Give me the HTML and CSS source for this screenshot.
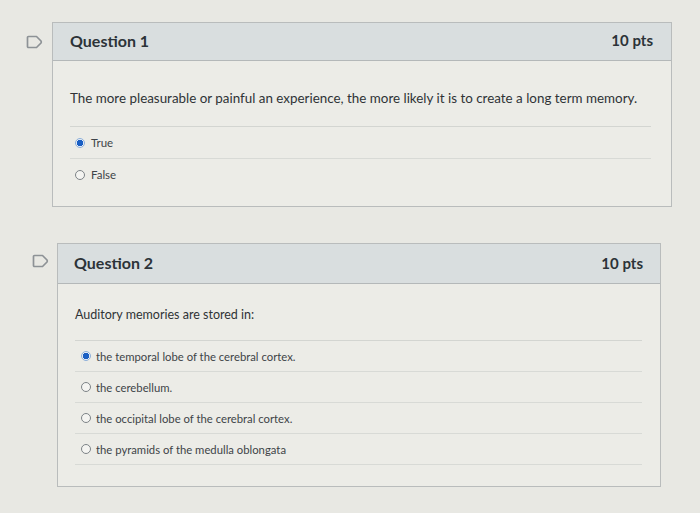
FILE: index.html
```html
<!DOCTYPE html>
<html>
<head>
<meta charset="utf-8">
<link rel="stylesheet" href="styles.css">
</head>
<body>
<div class="page">
  <section class="qrow q1">
    <div class="flag"><svg width="17" height="14" viewBox="0 0 17 14"><path d="M2.5 1.5 H10.5 L15 6 Q15.6 7 15 8 L10.5 12.5 H2.5 Q1.5 12.5 1.5 11.5 V2.5 Q1.5 1.5 2.5 1.5 Z" fill="none" stroke="#8d9296" stroke-width="1.7" stroke-linejoin="round"/></svg></div>
    <div class="card">
      <div class="card-head"><span class="qtitle">Question 1</span><span class="pts">10 pts</span></div>
      <div class="card-body">
        <p class="qtext">The more pleasurable or painful an experience, the more likely it is to create a long term memory.</p>
        <ul class="answers">
          <li class="answer"><span class="radio checked"></span><span>True</span></li>
          <li class="answer"><span class="radio"></span><span>False</span></li>
        </ul>
      </div>
    </div>
  </section>
  <section class="qrow q2">
    <div class="flag"><svg width="17" height="14" viewBox="0 0 17 14"><path d="M2.5 1.5 H10.5 L15 6 Q15.6 7 15 8 L10.5 12.5 H2.5 Q1.5 12.5 1.5 11.5 V2.5 Q1.5 1.5 2.5 1.5 Z" fill="none" stroke="#8d9296" stroke-width="1.7" stroke-linejoin="round"/></svg></div>
    <div class="card">
      <div class="card-head"><span class="qtitle">Question 2</span><span class="pts">10 pts</span></div>
      <div class="card-body">
        <p class="qtext">Auditory memories are stored in:</p>
        <ul class="answers">
          <li class="answer"><span class="radio checked"></span><span>the temporal lobe of the cerebral cortex.</span></li>
          <li class="answer"><span class="radio"></span><span>the cerebellum.</span></li>
          <li class="answer"><span class="radio"></span><span>the occipital lobe of the cerebral cortex.</span></li>
          <li class="answer"><span class="radio"></span><span>the pyramids of the medulla oblongata</span></li>
        </ul>
      </div>
    </div>
  </section>
</div>
</body>
</html>
```
FILE: styles.css
```css
html, body {
  margin: 0;
  padding: 0;
}
body {
  width: 700px;
  height: 513px;
  overflow: hidden;
  background: #e8e8e3;
  font-family: Lato, "Open Sans", sans-serif;
  color: #2f3a40;
}
.page {
  display: flex;
  flex-direction: column;
  gap: 36px;
  padding-top: 22px;
}
.qrow {
  display: flex;
  align-items: flex-start;
}
.flag {
  width: 17px;
  height: 14px;
  margin-top: 11px;
}
.q1 { padding-left: 26px; }
.q1 .flag { margin-right: 9px; }
.q1 .card { width: 620px; }
.q2 { padding-left: 32px; }
.q2 .flag { margin-top: 9px; margin-right: 8px; }
.q2 .card { width: 604px; }

.card {
  border: 1px solid #b9bcbc;
  background: #ecece7;
  box-sizing: border-box;
}
.card-head {
  display: flex;
  justify-content: space-between;
  align-items: center;
  height: 38px;
  padding: 0 18px 3px 17px;
  box-sizing: border-box;
  background: #d9dedf;
  border-bottom: 1px solid #b4b8b9;
}
.qtitle, .pts {
  font-weight: 700;
  font-size: 16px;
  color: #2c3338;
}
.pts { font-size: 15px; }
.card-body {
  padding: 28px 20px 16px 17px;
}
.qtext {
  margin: 0;
  font-size: 13.4px;
  line-height: 18px;
  color: #2f3336;
}
.answers {
  list-style: none;
  margin: 19px 0 0 0;
  padding: 0;
  border-top: 1px solid #d3d5d1;
}
.answer {
  display: flex;
  align-items: center;
  gap: 6px;
  height: 31px;
  padding-left: 5px;
  font-size: 11.5px;
  color: #3e4448;
  border-bottom: 1px solid #d8dad6;
}
.answer:last-child { border-bottom: none; }
.radio {
  width: 10px;
  height: 10px;
  border-radius: 50%;
  border: 1px solid #7d8387;
  box-sizing: border-box;
  background: #f4f4f1;
  flex: none;
}
.radio.checked {
  border: 1px solid #8db0da;
  background: radial-gradient(circle, #1a5fc4 0 3px, #e9eef5 3.5px);
}
.q2 .card-head { height: 40px; padding: 0 17px 2px 16px; }
.q2 .card-body { padding: 22px 18px 21px 17px; }
.q2 .qtext { font-size: 12.5px; }
.q2 .answers { margin-top: 16px; }
.q2 .answer { height: 30px; padding-left: 6px; gap: 5px; font-size: 11.3px; }
.q2 .answer:last-child { border-bottom: 1px solid #d8dad6; }
```
